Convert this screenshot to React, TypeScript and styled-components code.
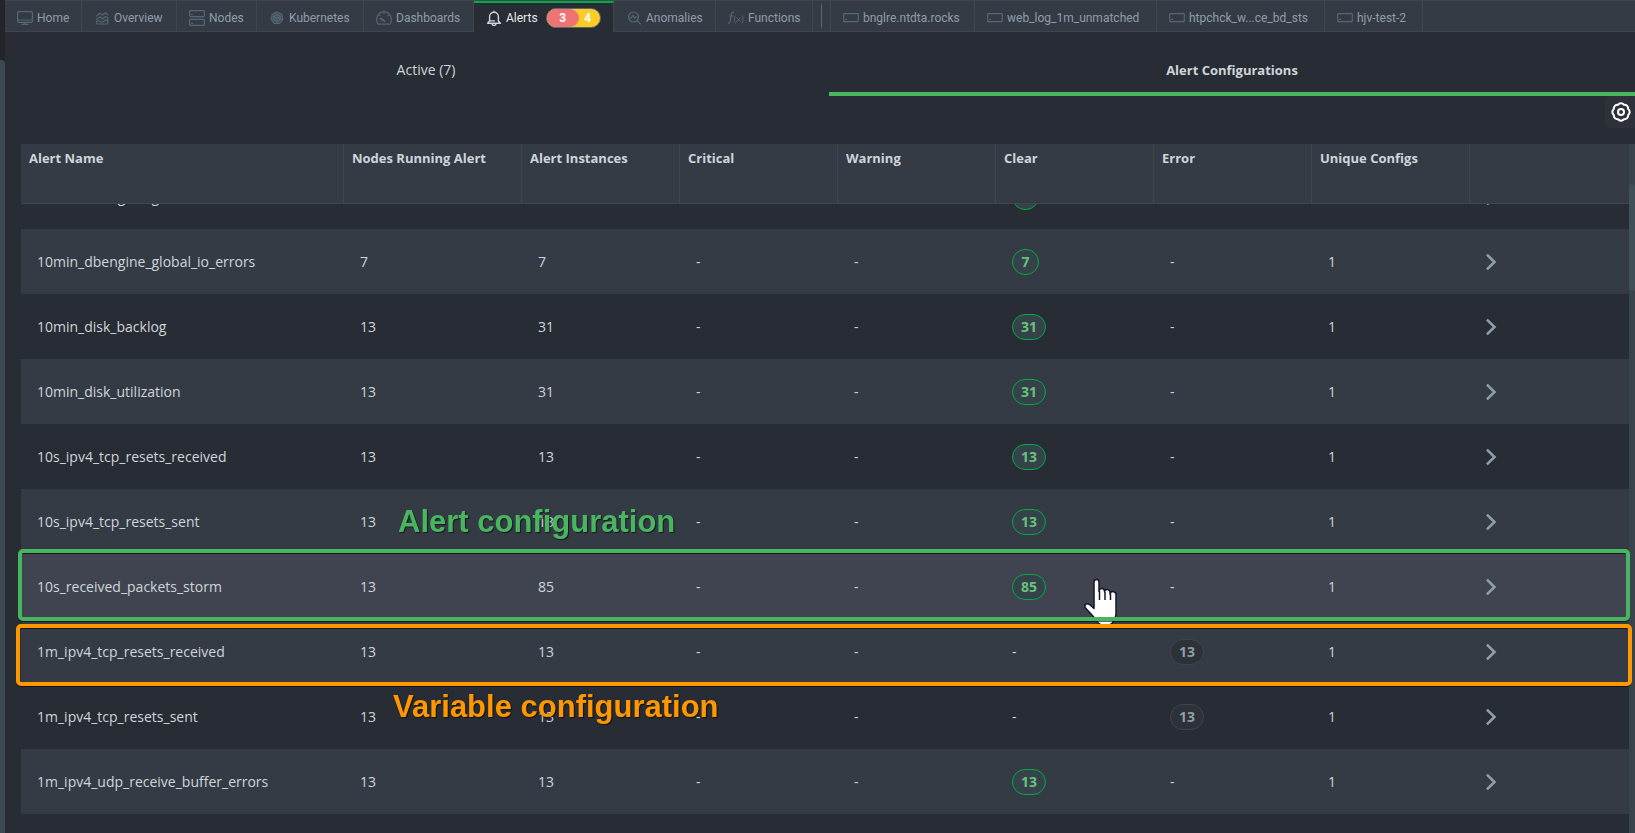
import React, { useLayoutEffect, useRef } from "react";
import styled, { createGlobalStyle, css } from "styled-components";

const color = {
  page: "#282c34",
  panel: "#353b45",
  hover: "#3f4450",
  line: "#40464f",
  text: "#cfd5da",
  muted: "#8f9ea9",
  icon: "#536775",
  green: "#00ab44",
  accent: "#48b661",
  orange: "#ff9700",
  rail: "#3d4a54",
};

const uiFont = `"Open Sans", "Noto Sans", sans-serif`;
const navFont = `Roboto, "Noto Sans", sans-serif`;

const GlobalStyle = createGlobalStyle`
  *, *::before, *::after { box-sizing: border-box; }
  body {
    margin: 0;
    background: ${color.page};
    color: ${color.text};
    font-family: ${uiFont};
    font-size: 14px;
    line-height: 20px;
  }
  button { font: inherit; color: inherit; background: none; border: 0; padding: 0; cursor: pointer; }
  a { color: inherit; text-decoration: none; }
`;

const Shell = styled.div`
  display: flex;
  height: 100vh;
  overflow: hidden;
`;

const SideRail = styled.div`
  flex: none;
  width: 5px;
  padding-top: 60px;
  background: #21242b;
`;

const SideRailThumb = styled.div`
  height: 100%;
  border-top-right-radius: 4px;
  background: ${color.rail};
`;

const Main = styled.main`
  flex: 1;
  min-width: 0;
  display: flex;
  flex-direction: column;
`;

const TopBar = styled.nav`
  flex: none;
  display: flex;
  height: 32px;
  border-top: 1px solid ${color.line};
  background: ${color.panel};
  font-family: ${navFont};
  font-size: 12px;
  line-height: 16px;
  color: ${color.muted};
`;

const NavTab = styled.a<{ $width: number; $active?: boolean }>`
  flex: none;
  width: ${(p) => p.$width}px;
  display: flex;
  align-items: center;
  gap: 4px;
  padding: 3px 0 0 12px;
  border-right: 1px solid ${color.line};
  border-bottom: 1px solid ${color.line};
  white-space: nowrap;
  svg { flex: none; color: ${color.icon}; }
  ${(p) =>
    p.$active &&
    css`
      padding-top: 0;
      background: ${color.page};
      border-top: 2px solid ${color.green};
      border-bottom: 0;
      color: #e6eaed;
      svg { color: #cfd5da; }
    `}
`;

const BarGap = styled.div`
  flex: none;
  width: 18px;
  display: flex;
  justify-content: center;
  align-items: center;
  border-right: 1px solid ${color.line};
  border-bottom: 1px solid ${color.line};
`;

const Divider = styled.span`
  width: 1px;
  height: 24px;
  background: ${color.icon};
`;

const BarRest = styled.div`
  flex: 1;
  border-bottom: 1px solid ${color.line};
`;

const CountPill = styled.span`
  display: flex;
  width: 55px;
  height: 20px;
  margin-left: 4px;
  border: 1px solid ${color.icon};
  border-radius: 10px;
  background: #ffcc26;
  color: #fff;
  font-weight: 700;
  line-height: 18px;
  text-align: center;
  overflow: hidden;
`;

const CriticalCount = styled.span`
  width: 32px;
  border-radius: 9px;
  background: #f07373;
`;

const WarningCount = styled.span`
  width: 18px;
`;

const ViewTabs = styled.div`
  flex: none;
  display: flex;
  height: 64px;
  padding-left: 18px;
`;

const ViewTab = styled.button<{ $active?: boolean }>`
  flex: 1;
  padding-top: 16px;
  border-bottom: 4px solid ${(p) => (p.$active ? color.accent : "transparent")};
  font-size: ${(p) => (p.$active ? 13 : 14)}px;
  font-weight: ${(p) => (p.$active ? 700 : 400)};
`;

const Tools = styled.div`
  flex: none;
  display: flex;
  justify-content: flex-end;
  height: 48px;
`;

const SettingsButton = styled.button`
  width: 30px;
  height: 32px;
  display: flex;
  align-items: center;
  padding-left: 6px;
  border-radius: 4px 0 0 4px;
  background: #2d323a;
  color: #fff;
`;

const TablePane = styled.section`
  position: relative;
  flex: 1;
  min-height: 0;
  display: flex;
  margin-left: 16px;
`;

const Scroller = styled.div`
  flex: 1;
  min-width: 0;
  overflow-y: auto;
  padding-bottom: 32px;
  scrollbar-width: none;
`;

const ScrollTrack = styled.div`
  flex: none;
  width: 6px;
  padding-top: 40px;
  background: #39434c;
`;

const ScrollThumb = styled.div`
  height: 107px;
  border-radius: 3px;
  background: #414f58;
`;

const Table = styled.table`
  width: 100%;
  table-layout: fixed;
  border-collapse: separate;
  border-spacing: 0;
`;

const Col = styled.col<{ $width?: number }>`
  width: ${(p) => (p.$width ? `${p.$width}px` : "auto")};
`;

const HeadCell = styled.th`
  position: sticky;
  top: 0;
  z-index: 1;
  height: 60px;
  padding: 4px 8px;
  border-right: 1px solid ${color.line};
  border-bottom: 1px solid ${color.line};
  background: ${color.panel};
  font-size: 13px;
  font-weight: 700;
  text-align: left;
  vertical-align: top;
  white-space: nowrap;
  &:last-child { border-right-color: transparent; }
`;

const Row = styled.tr<{ $hovered?: boolean }>`
  background: ${color.page};
  &:nth-child(even) { background: ${color.panel}; }
  &:nth-child(8) { background: ${color.panel}; }
  ${(p) => p.$hovered && css`&&& { background: ${color.hover}; }`}
`;

const Cell = styled.td`
  height: 65px;
  padding: 0 16px;
  vertical-align: middle;
  white-space: nowrap;
`;

const Badge = styled.span<{ $tone: "clear" | "error" }>`
  display: inline-flex;
  align-items: center;
  justify-content: center;
  height: 26px;
  min-width: 27px;
  padding: 0 8px;
  border: 1px solid ${(p) => (p.$tone === "clear" ? color.green : "#3f4550")};
  border-radius: 13px;
  background: ${(p) => (p.$tone === "clear" ? "#36424a" : "#2d3239")};
  color: ${(p) => (p.$tone === "clear" ? "#68c47d" : color.muted)};
  font-weight: 700;
  vertical-align: middle;
`;

const OpenButton = styled.button`
  display: flex;
  color: ${color.muted};
`;

const Frame = styled.div<{ $tone: string; $top: number; $height: number; $left: number; $right: number }>`
  position: absolute;
  z-index: 3;
  top: ${(p) => p.$top}px;
  height: ${(p) => p.$height}px;
  left: ${(p) => p.$left}px;
  right: ${(p) => p.$right}px;
  border: 4px solid ${(p) => p.$tone};
  border-radius: 5px;
  box-shadow: 0 1px 0 rgba(0, 0, 0, 0.6), inset 0 1px 0 rgba(0, 0, 0, 0.6);
  pointer-events: none;
`;

const Caption = styled.div<{ $tone: string; $top: number; $left: number }>`
  position: absolute;
  z-index: 3;
  top: ${(p) => p.$top}px;
  left: ${(p) => p.$left}px;
  color: ${(p) => p.$tone};
  font: 700 31px/36px "Liberation Sans", Arial, sans-serif;
  text-shadow: 1px 1px 1px rgba(0, 0, 0, 0.6);
  white-space: nowrap;
  pointer-events: none;
`;

const Pointer = styled.svg`
  position: absolute;
  z-index: 2;
  top: 434px;
  left: 1062px;
  pointer-events: none;
`;

const stroke = { fill: "none", stroke: "currentColor", strokeWidth: 1.2, strokeLinejoin: "round", strokeLinecap: "round" } as const;

const Icon = ({ children }: { children: React.ReactNode }) => (
  <svg width="16" height="16" viewBox="0 0 16 16" aria-hidden="true" {...stroke}>
    {children}
  </svg>
);

const HomeIcon = () => (
  <Icon>
    <rect x="0.6" y="1.6" width="14.8" height="10.8" rx="1.2" />
    <path d="M1 10h14M8 12.400v2M5 14.400h6" />
  </Icon>
);
const OverviewIcon = () => (
  <Icon>
    <path d="M2.500 6 6 3.200 8.500 5 11.500 2.800l2.300 2M2.500 9.500 6 6.800 8.500 9l3-2.600 2.300 1.600v4.500a1.500 1.500 0 0 1-1.500 1.500h-8.300a1.500 1.500 0 0 1-1.500-1.500M2.500 11.500l2-.8 3.500 1.500 3.500-2 2.300.5" />
  </Icon>
);
const NodesIcon = () => (
  <Icon>
    <rect x="0.6" y="0.600" width="14.800" height="6" rx="1" />
    <rect x="0.600" y="9.400" width="14.800" height="6" rx="1" />
    <path d="M2.600 4.500h1M2.600 13.300h1" />
  </Icon>
);
const KubernetesIcon = () => (
  <Icon>
    <path fill="currentColor" fillOpacity="0.450" d="M8 2l4.700 2.200 1.200 5L10.600 13.500H5.400L2.100 9.200l1.200-5z" />
    <circle cx="8" cy="8" r="3.200" />
    <path strokeWidth="0.900" d="M8 3.500v9M3.800 6.500l8.400 3M12.200 6.500l-8.400 3" />
  </Icon>
);
const DashboardsIcon = () => (
  <Icon>
    <path d="M2.200 14.200A7.300 7.300 0 0 1 .7 9 7.300 7.300 0 0 1 15.300 9a7.300 7.300 0 0 1-1.500 5.200z" />
    <path d="M8 2v1.500M3 5l.8.600M13 5l-.8.600" />
    <path strokeWidth="2" d="M4.500 8.500 8.500 11" />
  </Icon>
);
const BellIcon = () => (
  <Icon>
    <path strokeWidth="1.400" d="M8 1.200v.8M3.600 11V6.600a4.400 4.400 0 0 1 8.800 0V11l2 2.200H1.600zM6 13.400a2 2 0 0 0 4 0M4 10.900h4.500" />
  </Icon>
);
const AnomaliesIcon = () => (
  <Icon>
    <circle cx="7.500" cy="7" r="5" />
    <path d="M11.300 10.800 14.400 14M3.500 8l2-.3L7 5.200l1.700 3.300 1-1.500h1.500" />
  </Icon>
);
const FunctionsIcon = () => (
  <Icon>
    <path d="M5.500 2.500c-1.500-.5-2 .5-2.300 2.500l-1 6.500c-.2 1.300-.8 1.900-1.700 1.500M1.800 6h3" />
    <path strokeWidth="1" d="M7.200 6c-1.300 2-1.300 5 0 7M14.200 6c1.300 2 1.300 5 0 7M8.800 7.800l3.600 3.800M12.400 7.800l-3.600 3.800" />
  </Icon>
);
const NodeIcon = () => (
  <Icon>
    <rect x="0.700" y="3.700" width="14.600" height="8" rx="0.600" />
    <path d="M2.800 9.400h.6" />
  </Icon>
);
const GearIcon = () => (
  <svg width="20" height="20" viewBox="0 0 20 20" fill="none" stroke="currentColor" strokeWidth="2" strokeLinejoin="round" aria-hidden="true">
    <path d="M7 2.800a3.800 3.800 0 0 1 6 0 3.800 3.800 0 0 1 4.200 4.200 3.800 3.800 0 0 1 0 6 3.800 3.800 0 0 1-4.200 4.200 3.800 3.800 0 0 1-6 0 3.800 3.800 0 0 1-4.200-4.200 3.800 3.800 0 0 1 0-6 3.800 3.800 0 0 1 4.200-4.200z" />
    <circle cx="10" cy="10" r="3" />
  </svg>
);
const ChevronIcon = () => (
  <svg width="11" height="18" viewBox="0 0 11 18" fill="none" stroke="currentColor" strokeWidth="2.600" aria-hidden="true">
    <path d="M.9 1.600 8.500 9 .9 16.400" />
  </svg>
);

const views = [
  { label: "Home", icon: <HomeIcon />, width: 77 },
  { label: "Overview", icon: <OverviewIcon />, width: 95 },
  { label: "Nodes", icon: <NodesIcon />, width: 80 },
  { label: "Kubernetes", icon: <KubernetesIcon />, width: 107 },
  { label: "Dashboards", icon: <DashboardsIcon />, width: 110 },
  { label: "Alerts", icon: <BellIcon />, width: 140, active: true },
  { label: "Anomalies", icon: <AnomaliesIcon />, width: 102 },
  { label: "Functions", icon: <FunctionsIcon />, width: 97 },
];

const nodeTabs = [
  { label: "bnglre.ntdta.rocks", width: 144 },
  { label: "web_log_1m_unmatched", width: 182 },
  { label: "htpchck_w...ce_bd_sts", width: 168 },
  { label: "hjv-test-2", width: 98 },
];

const columns: { label: string; width?: number }[] = [
  { label: "Alert Name", width: 323 },
  { label: "Nodes Running Alert", width: 178 },
  { label: "Alert Instances", width: 158 },
  { label: "Critical", width: 158 },
  { label: "Warning", width: 158 },
  { label: "Clear", width: 158 },
  { label: "Error", width: 158 },
  { label: "Unique Configs", width: 158 },
  { label: "" },
];

type Alert = { name: string; nodes: number; instances: number; clear?: number; error?: number; hovered?: boolean };

const alerts: Alert[] = [
  { name: "10min_dbengine_global_fs_errors", nodes: 7, instances: 7, clear: 7 },
  { name: "10min_dbengine_global_io_errors", nodes: 7, instances: 7, clear: 7 },
  { name: "10min_disk_backlog", nodes: 13, instances: 31, clear: 31 },
  { name: "10min_disk_utilization", nodes: 13, instances: 31, clear: 31 },
  { name: "10s_ipv4_tcp_resets_received", nodes: 13, instances: 13, clear: 13 },
  { name: "10s_ipv4_tcp_resets_sent", nodes: 13, instances: 13, clear: 13 },
  { name: "10s_received_packets_storm", nodes: 13, instances: 85, clear: 85, hovered: true },
  { name: "1m_ipv4_tcp_resets_received", nodes: 13, instances: 13, error: 13 },
  { name: "1m_ipv4_tcp_resets_sent", nodes: 13, instances: 13, error: 13 },
  { name: "1m_ipv4_udp_receive_buffer_errors", nodes: 13, instances: 13, clear: 13 },
];

const Count = ({ value, tone }: { value?: number; tone: "clear" | "error" }) =>
  value === undefined ? <>-</> : <Badge $tone={tone}>{value}</Badge>;

export default function App() {
  const scroller = useRef<HTMLDivElement>(null);

  // Open the list part-way down, with the first row tucked under the header.
  useLayoutEffect(() => {
    if (scroller.current) scroller.current.scrollTop = 40;
  }, []);

  return (
    <>
      <GlobalStyle />
      <Shell>
        <SideRail>
          <SideRailThumb />
        </SideRail>
        <Main>
          <TopBar>
            {views.map((v) => (
              <NavTab key={v.label} href="#" $width={v.width} $active={v.active}>
                {v.icon}
                {v.label}
                {v.active && (
                  <CountPill>
                    <CriticalCount>3</CriticalCount>
                    <WarningCount>4</WarningCount>
                  </CountPill>
                )}
              </NavTab>
            ))}
            <BarGap>
              <Divider />
            </BarGap>
            {nodeTabs.map((t) => (
              <NavTab key={t.label} href="#" $width={t.width}>
                <NodeIcon />
                {t.label}
              </NavTab>
            ))}
            <BarRest />
          </TopBar>

          <ViewTabs role="tablist">
            <ViewTab role="tab" aria-selected={false}>Active (7)</ViewTab>
            <ViewTab role="tab" aria-selected $active>Alert Configurations</ViewTab>
          </ViewTabs>

          <Tools>
            <SettingsButton aria-label="Table settings">
              <GearIcon />
            </SettingsButton>
          </Tools>

          <TablePane>
            <Scroller ref={scroller}>
              <Table>
                <colgroup>
                  {columns.map((c) => (
                    <Col key={c.label} $width={c.width} />
                  ))}
                </colgroup>
                <thead>
                  <tr>
                    {columns.map((c) => (
                      <HeadCell key={c.label} scope="col">{c.label}</HeadCell>
                    ))}
                  </tr>
                </thead>
                <tbody>
                  {alerts.map((a) => (
                    <Row key={a.name} $hovered={a.hovered}>
                      <Cell>{a.name}</Cell>
                      <Cell>{a.nodes}</Cell>
                      <Cell>{a.instances}</Cell>
                      <Cell>-</Cell>
                      <Cell>-</Cell>
                      <Cell><Count value={a.clear} tone="clear" /></Cell>
                      <Cell><Count value={a.error} tone="error" /></Cell>
                      <Cell>1</Cell>
                      <Cell>
                        <OpenButton aria-label={`Open ${a.name}`}>
                          <ChevronIcon />
                        </OpenButton>
                      </Cell>
                    </Row>
                  ))}
                </tbody>
              </Table>
            </Scroller>
            <ScrollTrack>
              <ScrollThumb />
            </ScrollTrack>

            <Pointer width="36" height="48" viewBox="0 0 36 48" aria-hidden="true">
              <path
                d="M11 4a2.500 2.500 0 0 1 5 0v9.500a2.500 2.500 0 0 1 5.500-.5v1a2.500 2.500 0 0 1 5.500.5v1.500a2.500 2.500 0 0 1 6 1.500V36c0 3-1.500 4-2.500 7a6 6 0 0 1-4.500 4h-6c-3.500 0-5-2-6.500-5L2.500 30c-2-3 1-5.500 4-3.500L11 30.500z"
                fill="#fff"
                stroke="#14172a"
                strokeWidth="1.500"
                strokeLinejoin="round"
              />
              <path d="M16.500 13v9M22 14v8M27.500 16v6" stroke="#14172a" strokeWidth="1.500" />
            </Pointer>
            <Frame $tone={color.accent} $top={405} $height={72} $left={-3} $right={5} />
            <Frame $tone={color.orange} $top={480} $height={62} $left={-5} $right={3} />
            <Caption $tone={color.accent} $top={360} $left={377}>Alert configuration</Caption>
            <Caption $tone={color.orange} $top={545} $left={372}>Variable configuration</Caption>
          </TablePane>
        </Main>
      </Shell>
    </>
  );
}
